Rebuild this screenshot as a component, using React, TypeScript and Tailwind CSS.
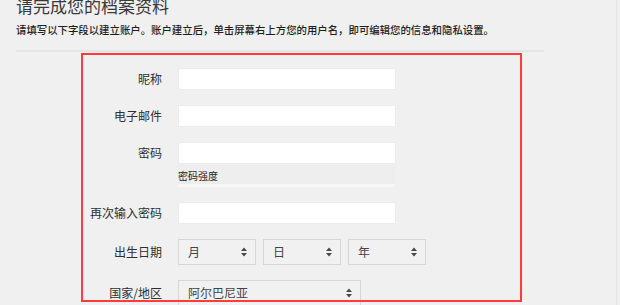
import React from "react";

const font = { fontFamily: '"Noto Sans CJK SC", "Noto Sans", sans-serif' };

function Arrows() {
  return (
    <svg width="6" height="10" viewBox="0 0 6 10" className="shrink-0">
      <path d="M0 4 L3 0.5 L6 4 Z" fill="#4a4a4a" />
      <path d="M0 6 L3 9.5 L6 6 Z" fill="#4a4a4a" />
    </svg>
  );
}

function SelectBox({ text, w }: { text: string; w: string }) {
  return (
    <div
      className={`${w} h-[26px] border border-[#d6d6d6] bg-[#f1f1f1] flex items-center justify-between pl-[9px] pr-[8px] text-[12px] text-[#444]`}
    >
      <span>{text}</span>
      <Arrows />
    </div>
  );
}

function Row({ label, children, mt, h = "h-[22px]" }: { label: string; children: React.ReactNode; mt: string; h?: string }) {
  return (
    <div className={`flex items-center ${mt} ${h}`}>
      <div className="w-[162px] text-right text-[12px] text-[#2e2e2e] leading-none">{label}</div>
      <div className="ml-[16px] flex items-center">{children}</div>
    </div>
  );
}

function Input() {
  return <div className="w-[218px] h-[22px] bg-white border border-[#ececec]" />;
}

export default function App() {
  return (
    <div className="relative w-[620px] h-[305px] bg-[#f0f0f0] overflow-hidden" style={font}>
      <div className="absolute right-[3px] top-0 bottom-0 w-px bg-[#e4e4e4]" />
      <div className="pl-[16px]">
        <div className="-mt-[3px] text-[17px] leading-[17px] text-[#3a3a3a]">请完成您的档案资料</div>
        <div className="mt-[10px] text-[10.4px] leading-[11px] text-[#1e1e1e] font-medium whitespace-nowrap">
          请填写以下字段以建立账户。账户建立后，单击屏幕右上方您的用户名，即可编辑您的信息和隐私设置。
        </div>
        <div className="mt-[15px] w-[528px] h-[2px] bg-[#e5e5e5]" />
      </div>

      <div className="flex flex-col">
        <Row label="昵称" mt="mt-[16px]">
          <Input />
        </Row>
        <Row label="电子邮件" mt="mt-[15px]">
          <Input />
        </Row>
        <Row label="密码" mt="mt-[15px]">
          <Input />
        </Row>
        <div className="flex">
          <div className="ml-[178px] w-[217px] h-[24px] flex flex-col">
            <div className="h-[20px] bg-[#eeeeee] flex items-end pb-[2px] text-[10px] leading-none text-[#222]">
              <span className="pb-[1px]">密码强度</span>
            </div>
            <div className="h-[3px] bg-[#f7f7f7]" />
          </div>
        </div>
        <Row label="再次输入密码" mt="mt-[14px]">
          <Input />
        </Row>
        <Row label="出生日期" mt="mt-[15px]" h="h-[26px]">
          <div className="flex gap-[7px]">
            <SelectBox text="月" w="w-[78px]" />
            <SelectBox text="日" w="w-[78px]" />
            <SelectBox text="年" w="w-[78px]" />
          </div>
        </Row>
        <Row label="国家/地区" mt="mt-[15px]" h="h-[26px]">
          <SelectBox text="阿尔巴尼亚" w="w-[183px]" />
        </Row>
      </div>

      <div className="absolute left-[81px] top-[53px] w-[441px] h-[249px] border-2 border-[#ff3b3b] pointer-events-none" />
    </div>
  );
}
